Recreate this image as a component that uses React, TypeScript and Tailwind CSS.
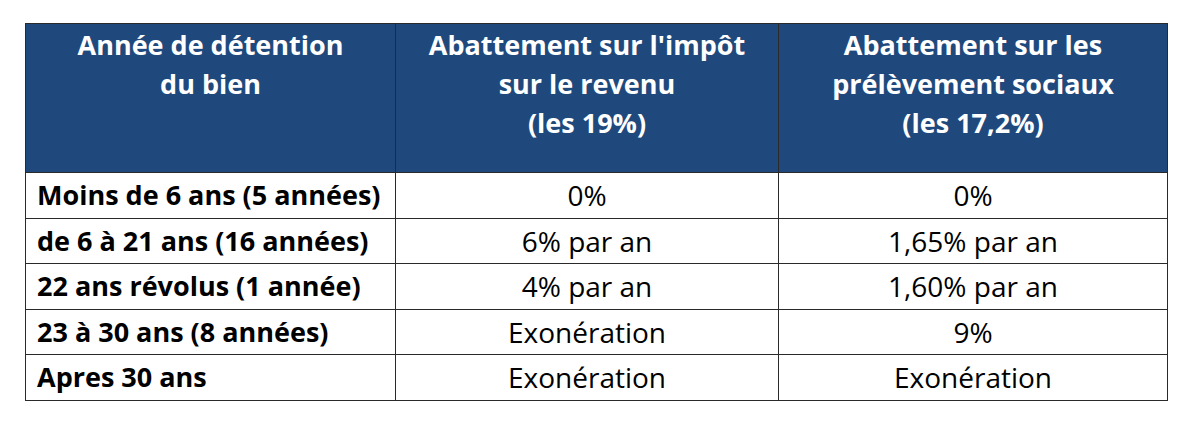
const rows = [
  ["Moins de 6 ans (5 années)", "0%", "0%"],
  ["de 6 à 21 ans (16 années)", "6% par an", "1,65% par an"],
  ["22 ans révolus (1 année)", "4% par an", "1,60% par an"],
  ["23 à 30 ans (8 années)", "Exonération", "9%"],
  ["Apres 30 ans", "Exonération", "Exonération"],
];

export default function App() {
  return (
    <div className="h-[426px] w-[1200px] bg-white pl-[25px] pt-[23px] font-['Open_Sans',sans-serif] text-black">
      <table className="w-[1142px] table-fixed border-collapse">
        <colgroup>
          <col className="w-[370px]" />
          <col className="w-[383px]" />
          <col className="w-[389px]" />
        </colgroup>
        <thead>
          <tr className="h-[149px] bg-[#1f497d] text-white">
            <th className="border border-[#2a2a2a] px-2 pt-[1px] align-top text-[27px] font-bold leading-[39px]">
              Année de détention
              <br />
              du bien
            </th>
            <th className="border border-[#2a2a2a] px-2 pt-[1px] align-top text-[27px] font-bold leading-[39px]">
              Abattement sur l'impôt
              <br />
              sur le revenu
              <br />
              (les 19%)
            </th>
            <th className="border border-[#2a2a2a] px-2 pt-[1px] align-top text-[27px] font-bold leading-[39px]">
              Abattement sur les
              <br />
              prélèvement sociaux
              <br />
              (les 17,2%)
            </th>
          </tr>
        </thead>
        <tbody>
          {rows.map((row) => (
            <tr key={row[0]} className="h-[45.5px]">
              <td className="border border-[#2a2a2a] pl-[11px] text-[27px] font-bold">{row[0]}</td>
              <td className="border border-[#2a2a2a] text-center text-[28px]">{row[1]}</td>
              <td className="border border-[#2a2a2a] text-center text-[28px]">{row[2]}</td>
            </tr>
          ))}
        </tbody>
      </table>
    </div>
  );
}
